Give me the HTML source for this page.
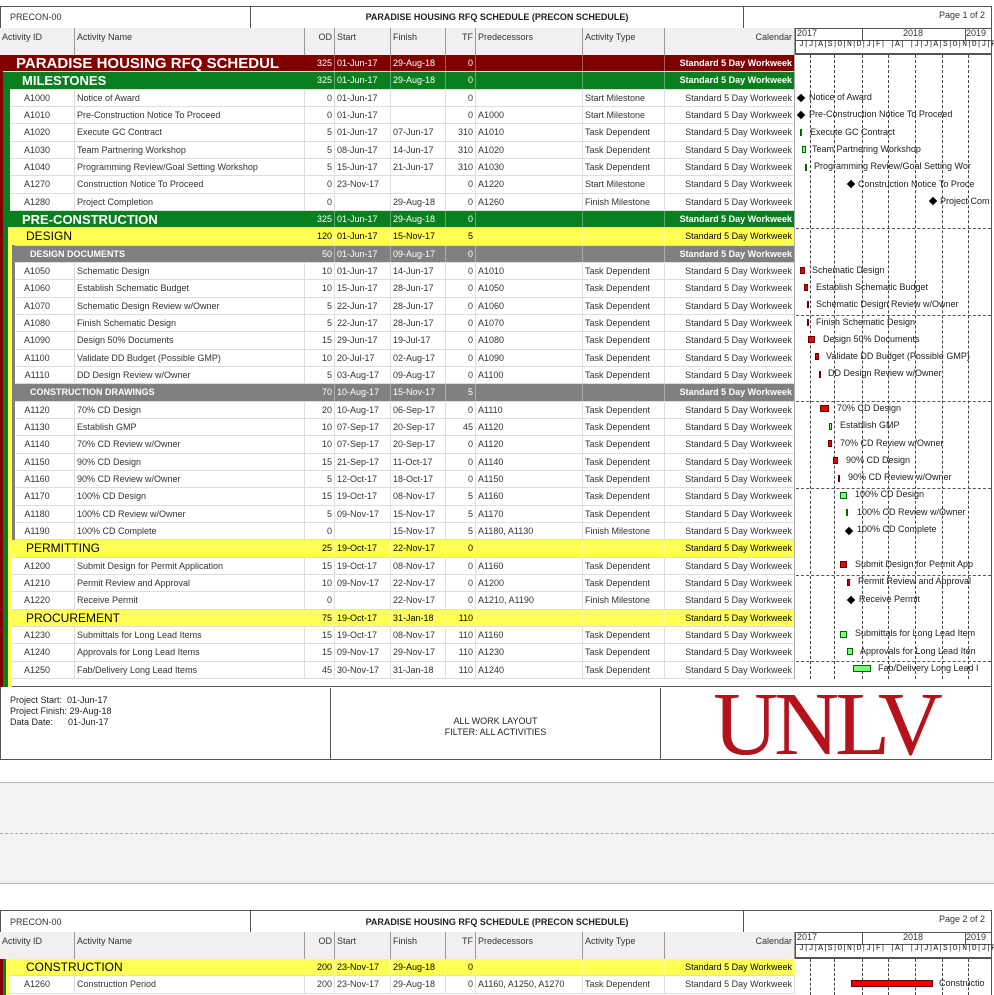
<!DOCTYPE html>
<html><head><meta charset="utf-8"><style>
*{margin:0;padding:0;box-sizing:border-box}
body{width:994px;height:995px;background:#fff;position:relative;overflow:hidden;font-family:"Liberation Sans",Arial,sans-serif;color:#333;font-size:9px}
.a{position:absolute}
.box{position:absolute;border:1px solid #555}
.r{position:absolute;left:0;width:795px;height:17.33px;border-bottom:1px solid #ddd}
.r span{position:absolute;top:0;height:17px;line-height:17px;white-space:nowrap;overflow:hidden;border-right:1px solid #ddd;padding:0 2px}
.id{left:0;width:75px;text-align:center}
.nm{left:75px;width:230px}
.od{left:305px;width:30px;text-align:right}
.st{left:335px;width:56px}
.fi{left:391px;width:55px}
.tf{left:446px;width:30px;text-align:right}
.pr{left:476px;width:107px}
.ty{left:583px;width:82px}
.ca{left:665px;width:130px;text-align:right}
.g span{border-right:1px solid rgba(255,255,255,.35)}
.red{background:#800000;color:#fff}
.grn{background:#0a7f1f;color:#fff}
.yel{background:#ffff55;color:#000}
.gry{background:#808080;color:#fff}
.t{border:none!important;overflow:visible!important;font-weight:bold}
.ch span{position:absolute;top:0;height:27px;padding:1px 2px;border-right:1px solid #999;background:#f0f0f0;font-size:9px;color:#333}
.gl{position:absolute;font-size:9px;color:#222;white-space:nowrap;line-height:10px}
.dm{position:absolute;width:6px;height:6px;background:#000;transform:rotate(45deg)}
.br{position:absolute;height:7px;border:1px solid #600;background:#e00}
.bg{position:absolute;height:7px;border:1px solid #060;background:#7f7}
.vd{position:absolute;width:0;border-left:1px dashed #444}
.hd{position:absolute;height:0;border-top:1px dashed #555}
</style></head><body>

<div class="box" style="left:0;top:6px;width:992px;height:23px"></div>
<div class="a" style="left:250px;top:6px;width:1px;height:23px;background:#555"></div>
<div class="a" style="left:743px;top:6px;width:1px;height:23px;background:#555"></div>
<div class="a" style="left:10px;top:12px;font-size:9px">PRECON-00</div>
<div class="a" style="left:251px;top:12px;width:492px;text-align:center;font-size:9px;font-weight:bold;color:#222">PARADISE HOUSING RFQ SCHEDULE (PRECON SCHEDULE)</div>
<div class="a" style="left:744px;top:10px;width:241px;text-align:right;font-size:9px">Page 1 of 2</div>

<div class="r ch" style="top:28px;height:27px;border-bottom:2px solid #666"><span class="id" style="text-align:left">Activity ID</span><span class="nm">Activity Name</span><span class="od">OD</span><span class="st">Start</span><span class="fi">Finish</span><span class="tf">TF</span><span class="pr">Predecessors</span><span class="ty">Activity Type</span><span class="ca">Calendar</span></div>
<div class="a" style="left:795px;top:28px;width:197px;height:27px;border:1px solid #555;border-bottom:2px solid #555;background:#fff"></div>
<div class="a" style="left:797px;top:28px;font-size:9px">2017</div>
<div class="a" style="left:903px;top:28px;font-size:9px">2018</div>
<div class="a" style="left:966px;top:28px;font-size:9px">2019</div>
<div class="a" style="left:862px;top:28px;width:1px;height:12px;background:#555"></div>
<div class="a" style="left:965px;top:28px;width:1px;height:12px;background:#555"></div>
<div class="a" style="left:796px;top:40px;width:195px;height:1px;background:#555"></div>
<div class="a" style="left:799px;top:40px;font-size:8px;white-space:nowrap;font-family:'Liberation Mono',monospace;color:#222">J|J|A|S|O|N|D|J|F| |A| |J|J|A|S|O|N|D|J|F|</div>

<div class="r g red" style="top:55px"><span class="t" style="left:14px;font-size:15px;line-height:18px">PARADISE HOUSING RFQ SCHEDUL</span><span class="od">325</span><span class="st">01-Jun-17</span><span class="fi">29-Aug-18</span><span class="tf">0</span><span class="pr"></span><span class="ty"></span><span class="ca" style="font-weight:bold">Standard 5 Day Workweek</span></div>
<div class="r g grn" style="top:72.3px"><span class="t" style="left:20px;font-size:13px">MILESTONES</span><span class="od">325</span><span class="st">01-Jun-17</span><span class="fi">29-Aug-18</span><span class="tf">0</span><span class="pr"></span><span class="ty"></span><span class="ca" style="font-weight:bold">Standard 5 Day Workweek</span></div>
<div class="r" style="top:89.7px"><span class="id">A1000</span><span class="nm">Notice of Award</span><span class="od">0</span><span class="st">01-Jun-17</span><span class="fi"></span><span class="tf">0</span><span class="pr"></span><span class="ty">Start Milestone</span><span class="ca">Standard 5 Day Workweek</span></div>
<div class="r" style="top:107px"><span class="id">A1010</span><span class="nm">Pre-Construction Notice To Proceed</span><span class="od">0</span><span class="st">01-Jun-17</span><span class="fi"></span><span class="tf">0</span><span class="pr">A1000</span><span class="ty">Start Milestone</span><span class="ca">Standard 5 Day Workweek</span></div>
<div class="r" style="top:124.3px"><span class="id">A1020</span><span class="nm">Execute GC Contract</span><span class="od">5</span><span class="st">01-Jun-17</span><span class="fi">07-Jun-17</span><span class="tf">310</span><span class="pr">A1010</span><span class="ty">Task Dependent</span><span class="ca">Standard 5 Day Workweek</span></div>
<div class="r" style="top:141.7px"><span class="id">A1030</span><span class="nm">Team Partnering Workshop</span><span class="od">5</span><span class="st">08-Jun-17</span><span class="fi">14-Jun-17</span><span class="tf">310</span><span class="pr">A1020</span><span class="ty">Task Dependent</span><span class="ca">Standard 5 Day Workweek</span></div>
<div class="r" style="top:159px"><span class="id">A1040</span><span class="nm">Programming Review/Goal Setting Workshop</span><span class="od">5</span><span class="st">15-Jun-17</span><span class="fi">21-Jun-17</span><span class="tf">310</span><span class="pr">A1030</span><span class="ty">Task Dependent</span><span class="ca">Standard 5 Day Workweek</span></div>
<div class="r" style="top:176.3px"><span class="id">A1270</span><span class="nm">Construction Notice To Proceed</span><span class="od">0</span><span class="st">23-Nov-17</span><span class="fi"></span><span class="tf">0</span><span class="pr">A1220</span><span class="ty">Start Milestone</span><span class="ca">Standard 5 Day Workweek</span></div>
<div class="r" style="top:193.7px"><span class="id">A1280</span><span class="nm">Project Completion</span><span class="od">0</span><span class="st"></span><span class="fi">29-Aug-18</span><span class="tf">0</span><span class="pr">A1260</span><span class="ty">Finish Milestone</span><span class="ca">Standard 5 Day Workweek</span></div>
<div class="r g grn" style="top:211px"><span class="t" style="left:20px;font-size:13px">PRE-CONSTRUCTION</span><span class="od">325</span><span class="st">01-Jun-17</span><span class="fi">29-Aug-18</span><span class="tf">0</span><span class="pr"></span><span class="ty"></span><span class="ca" style="font-weight:bold">Standard 5 Day Workweek</span></div>
<div class="r g yel" style="top:228.3px"><span class="t" style="left:24px;font-size:12px;font-weight:normal">DESIGN</span><span class="od">120</span><span class="st">01-Jun-17</span><span class="fi">15-Nov-17</span><span class="tf">5</span><span class="pr"></span><span class="ty"></span><span class="ca">Standard 5 Day Workweek</span></div>
<div class="r g gry" style="top:245.7px"><span class="t" style="left:28px;font-size:9px">DESIGN DOCUMENTS</span><span class="od">50</span><span class="st">01-Jun-17</span><span class="fi">09-Aug-17</span><span class="tf">0</span><span class="pr"></span><span class="ty"></span><span class="ca" style="font-weight:bold">Standard 5 Day Workweek</span></div>
<div class="r" style="top:263px"><span class="id">A1050</span><span class="nm">Schematic Design</span><span class="od">10</span><span class="st">01-Jun-17</span><span class="fi">14-Jun-17</span><span class="tf">0</span><span class="pr">A1010</span><span class="ty">Task Dependent</span><span class="ca">Standard 5 Day Workweek</span></div>
<div class="r" style="top:280.3px"><span class="id">A1060</span><span class="nm">Establish Schematic Budget</span><span class="od">10</span><span class="st">15-Jun-17</span><span class="fi">28-Jun-17</span><span class="tf">0</span><span class="pr">A1050</span><span class="ty">Task Dependent</span><span class="ca">Standard 5 Day Workweek</span></div>
<div class="r" style="top:297.7px"><span class="id">A1070</span><span class="nm">Schematic Design Review w/Owner</span><span class="od">5</span><span class="st">22-Jun-17</span><span class="fi">28-Jun-17</span><span class="tf">0</span><span class="pr">A1060</span><span class="ty">Task Dependent</span><span class="ca">Standard 5 Day Workweek</span></div>
<div class="r" style="top:315px"><span class="id">A1080</span><span class="nm">Finish Schematic Design</span><span class="od">5</span><span class="st">22-Jun-17</span><span class="fi">28-Jun-17</span><span class="tf">0</span><span class="pr">A1070</span><span class="ty">Task Dependent</span><span class="ca">Standard 5 Day Workweek</span></div>
<div class="r" style="top:332.3px"><span class="id">A1090</span><span class="nm">Design 50% Documents</span><span class="od">15</span><span class="st">29-Jun-17</span><span class="fi">19-Jul-17</span><span class="tf">0</span><span class="pr">A1080</span><span class="ty">Task Dependent</span><span class="ca">Standard 5 Day Workweek</span></div>
<div class="r" style="top:349.7px"><span class="id">A1100</span><span class="nm">Validate DD Budget (Possible GMP)</span><span class="od">10</span><span class="st">20-Jul-17</span><span class="fi">02-Aug-17</span><span class="tf">0</span><span class="pr">A1090</span><span class="ty">Task Dependent</span><span class="ca">Standard 5 Day Workweek</span></div>
<div class="r" style="top:367px"><span class="id">A1110</span><span class="nm">DD Design Review w/Owner</span><span class="od">5</span><span class="st">03-Aug-17</span><span class="fi">09-Aug-17</span><span class="tf">0</span><span class="pr">A1100</span><span class="ty">Task Dependent</span><span class="ca">Standard 5 Day Workweek</span></div>
<div class="r g gry" style="top:384.3px"><span class="t" style="left:28px;font-size:9px">CONSTRUCTION DRAWINGS</span><span class="od">70</span><span class="st">10-Aug-17</span><span class="fi">15-Nov-17</span><span class="tf">5</span><span class="pr"></span><span class="ty"></span><span class="ca" style="font-weight:bold">Standard 5 Day Workweek</span></div>
<div class="r" style="top:401.7px"><span class="id">A1120</span><span class="nm">70% CD Design</span><span class="od">20</span><span class="st">10-Aug-17</span><span class="fi">06-Sep-17</span><span class="tf">0</span><span class="pr">A1110</span><span class="ty">Task Dependent</span><span class="ca">Standard 5 Day Workweek</span></div>
<div class="r" style="top:419px"><span class="id">A1130</span><span class="nm">Establish GMP</span><span class="od">10</span><span class="st">07-Sep-17</span><span class="fi">20-Sep-17</span><span class="tf">45</span><span class="pr">A1120</span><span class="ty">Task Dependent</span><span class="ca">Standard 5 Day Workweek</span></div>
<div class="r" style="top:436.3px"><span class="id">A1140</span><span class="nm">70% CD Review w/Owner</span><span class="od">10</span><span class="st">07-Sep-17</span><span class="fi">20-Sep-17</span><span class="tf">0</span><span class="pr">A1120</span><span class="ty">Task Dependent</span><span class="ca">Standard 5 Day Workweek</span></div>
<div class="r" style="top:453.7px"><span class="id">A1150</span><span class="nm">90% CD Design</span><span class="od">15</span><span class="st">21-Sep-17</span><span class="fi">11-Oct-17</span><span class="tf">0</span><span class="pr">A1140</span><span class="ty">Task Dependent</span><span class="ca">Standard 5 Day Workweek</span></div>
<div class="r" style="top:471px"><span class="id">A1160</span><span class="nm">90% CD Review w/Owner</span><span class="od">5</span><span class="st">12-Oct-17</span><span class="fi">18-Oct-17</span><span class="tf">0</span><span class="pr">A1150</span><span class="ty">Task Dependent</span><span class="ca">Standard 5 Day Workweek</span></div>
<div class="r" style="top:488.3px"><span class="id">A1170</span><span class="nm">100% CD Design</span><span class="od">15</span><span class="st">19-Oct-17</span><span class="fi">08-Nov-17</span><span class="tf">5</span><span class="pr">A1160</span><span class="ty">Task Dependent</span><span class="ca">Standard 5 Day Workweek</span></div>
<div class="r" style="top:505.7px"><span class="id">A1180</span><span class="nm">100% CD Review w/Owner</span><span class="od">5</span><span class="st">09-Nov-17</span><span class="fi">15-Nov-17</span><span class="tf">5</span><span class="pr">A1170</span><span class="ty">Task Dependent</span><span class="ca">Standard 5 Day Workweek</span></div>
<div class="r" style="top:523px"><span class="id">A1190</span><span class="nm">100% CD Complete</span><span class="od">0</span><span class="st"></span><span class="fi">15-Nov-17</span><span class="tf">5</span><span class="pr">A1180, A1130</span><span class="ty">Finish Milestone</span><span class="ca">Standard 5 Day Workweek</span></div>
<div class="r g yel" style="top:540.3px"><span class="t" style="left:24px;font-size:12px;font-weight:normal">PERMITTING</span><span class="od">25</span><span class="st">19-Oct-17</span><span class="fi">22-Nov-17</span><span class="tf">0</span><span class="pr"></span><span class="ty"></span><span class="ca">Standard 5 Day Workweek</span></div>
<div class="r" style="top:557.7px"><span class="id">A1200</span><span class="nm">Submit Design for Permit Application</span><span class="od">15</span><span class="st">19-Oct-17</span><span class="fi">08-Nov-17</span><span class="tf">0</span><span class="pr">A1160</span><span class="ty">Task Dependent</span><span class="ca">Standard 5 Day Workweek</span></div>
<div class="r" style="top:575px"><span class="id">A1210</span><span class="nm">Permit Review and Approval</span><span class="od">10</span><span class="st">09-Nov-17</span><span class="fi">22-Nov-17</span><span class="tf">0</span><span class="pr">A1200</span><span class="ty">Task Dependent</span><span class="ca">Standard 5 Day Workweek</span></div>
<div class="r" style="top:592.3px"><span class="id">A1220</span><span class="nm">Receive Permit</span><span class="od">0</span><span class="st"></span><span class="fi">22-Nov-17</span><span class="tf">0</span><span class="pr">A1210, A1190</span><span class="ty">Finish Milestone</span><span class="ca">Standard 5 Day Workweek</span></div>
<div class="r g yel" style="top:609.7px"><span class="t" style="left:24px;font-size:12px;font-weight:normal">PROCUREMENT</span><span class="od">75</span><span class="st">19-Oct-17</span><span class="fi">31-Jan-18</span><span class="tf">110</span><span class="pr"></span><span class="ty"></span><span class="ca">Standard 5 Day Workweek</span></div>
<div class="r" style="top:627px"><span class="id">A1230</span><span class="nm">Submittals for Long Lead Items</span><span class="od">15</span><span class="st">19-Oct-17</span><span class="fi">08-Nov-17</span><span class="tf">110</span><span class="pr">A1160</span><span class="ty">Task Dependent</span><span class="ca">Standard 5 Day Workweek</span></div>
<div class="r" style="top:644.3px"><span class="id">A1240</span><span class="nm">Approvals for Long Lead Items</span><span class="od">15</span><span class="st">09-Nov-17</span><span class="fi">29-Nov-17</span><span class="tf">110</span><span class="pr">A1230</span><span class="ty">Task Dependent</span><span class="ca">Standard 5 Day Workweek</span></div>
<div class="r" style="top:661.7px"><span class="id">A1250</span><span class="nm">Fab/Delivery Long Lead Items</span><span class="od">45</span><span class="st">30-Nov-17</span><span class="fi">31-Jan-18</span><span class="tf">110</span><span class="pr">A1240</span><span class="ty">Task Dependent</span><span class="ca">Standard 5 Day Workweek</span></div>

<div class="a" style="left:0;top:55px;width:3px;height:624px;background:#800000"></div>
<div class="a" style="left:3px;top:72px;width:5px;height:607px;background:#0a7f1f"></div>
<div class="a" style="left:8px;top:89px;width:2px;height:122px;background:#0a7f1f"></div>
<div class="a" style="left:8px;top:228px;width:4px;height:451px;background:#ffff55"></div>
<div class="a" style="left:12px;top:245px;width:3px;height:295px;background:#808080"></div>
<div class="a" style="left:794px;top:55px;width:1px;height:624px;background:#aaa"></div>

<div class="vd" style="left:810px;top:55px;height:624px"></div>
<div class="vd" style="left:834px;top:55px;height:624px"></div>
<div class="vd" style="left:862px;top:55px;height:624px"></div>
<div class="vd" style="left:888px;top:55px;height:624px"></div>
<div class="vd" style="left:915px;top:55px;height:624px"></div>
<div class="vd" style="left:942px;top:55px;height:624px"></div>
<div class="vd" style="left:968px;top:55px;height:624px"></div>
<div class="hd" style="left:796px;top:228px;width:195px"></div>
<div class="hd" style="left:796px;top:315px;width:195px"></div>
<div class="hd" style="left:796px;top:401px;width:195px"></div>
<div class="hd" style="left:796px;top:488px;width:195px"></div>
<div class="hd" style="left:796px;top:575px;width:195px"></div>
<div class="hd" style="left:796px;top:661px;width:195px"></div>
<div class="a" style="left:991px;top:55px;width:1px;height:632px;background:#555"></div>

<div class="dm" style="left:798px;top:95px"></div><div class="gl" style="left:809px;top:92px">Notice of Award</div>
<div class="dm" style="left:798px;top:112px"></div><div class="gl" style="left:809px;top:109px">Pre-Construction Notice To Proceed</div>
<div class="bg" style="left:800px;top:129px;width:2px"></div><div class="gl" style="left:810px;top:127px">Execute GC Contract</div>
<div class="bg" style="left:802px;top:146px;width:4px"></div><div class="gl" style="left:812px;top:144px">Team Partnering Workshop</div>
<div class="bg" style="left:805px;top:164px;width:2px"></div><div class="gl" style="left:814px;top:161px">Programming Review/Goal Setting Wor</div>
<div class="dm" style="left:848px;top:181px"></div><div class="gl" style="left:858px;top:179px">Construction Notice To Proce</div>
<div class="dm" style="left:930px;top:198px"></div><div class="gl" style="left:940px;top:196px">Project Com</div>

<div class="br" style="left:800px;top:267px;width:5px"></div><div class="gl" style="left:812px;top:265px">Schematic Design</div>
<div class="br" style="left:804px;top:284px;width:4px"></div><div class="gl" style="left:816px;top:282px">Establish Schematic Budget</div>
<div class="br" style="left:807px;top:301px;width:2px"></div><div class="gl" style="left:816px;top:299px">Schematic Design Review w/Owner</div>
<div class="br" style="left:807px;top:319px;width:2px"></div><div class="gl" style="left:816px;top:317px">Finish Schematic Design</div>
<div class="br" style="left:808px;top:336px;width:7px"></div><div class="gl" style="left:823px;top:334px">Design 50% Documents</div>
<div class="br" style="left:815px;top:353px;width:4px"></div><div class="gl" style="left:826px;top:351px">Validate DD Budget (Possible GMP)</div>
<div class="br" style="left:819px;top:371px;width:2px"></div><div class="gl" style="left:828px;top:368px">DD Design Review w/Owner</div>
<div class="br" style="left:820px;top:405px;width:9px"></div><div class="gl" style="left:837px;top:403px">70% CD Design</div>
<div class="bg" style="left:829px;top:423px;width:3px"></div><div class="gl" style="left:840px;top:420px">Establish GMP</div>
<div class="br" style="left:828px;top:440px;width:4px"></div><div class="gl" style="left:840px;top:438px">70% CD Review w/Owner</div>
<div class="br" style="left:833px;top:457px;width:5px"></div><div class="gl" style="left:846px;top:455px">90% CD Design</div>
<div class="br" style="left:838px;top:475px;width:2px"></div><div class="gl" style="left:848px;top:472px">90% CD Review w/Owner</div>
<div class="bg" style="left:840px;top:492px;width:7px"></div><div class="gl" style="left:855px;top:489px">100% CD Design</div>
<div class="bg" style="left:846px;top:509px;width:2px"></div><div class="gl" style="left:857px;top:507px">100% CD Review w/Owner</div>
<div class="dm" style="left:846px;top:528px"></div><div class="gl" style="left:857px;top:524px">100% CD Complete</div>
<div class="br" style="left:840px;top:561px;width:7px"></div><div class="gl" style="left:855px;top:559px">Submit Design for Permit App</div>
<div class="br" style="left:847px;top:579px;width:3px"></div><div class="gl" style="left:858px;top:576px">Permit Review and Approval</div>
<div class="dm" style="left:848px;top:597px"></div><div class="gl" style="left:859px;top:594px">Receive Permit</div>
<div class="bg" style="left:840px;top:631px;width:7px"></div><div class="gl" style="left:855px;top:628px">Submittals for Long Lead Item</div>
<div class="bg" style="left:847px;top:648px;width:6px"></div><div class="gl" style="left:860px;top:646px">Approvals for Long Lead Iten</div>
<div class="bg" style="left:853px;top:665px;width:18px"></div><div class="gl" style="left:878px;top:663px">Fab/Delivery Long Lead I</div>

<div class="a" style="left:0;top:679px;width:992px;height:8px;border-bottom:1px solid #555"></div>
<div class="a" style="left:0;top:679px;width:3px;height:8px;background:#800000"></div>
<div class="a" style="left:3px;top:679px;width:5px;height:8px;background:#0a7f1f"></div>
<div class="a" style="left:8px;top:679px;width:4px;height:8px;background:#ffff55"></div>

<div class="box" style="left:0;top:687px;width:992px;height:73px;border-top:none"></div>
<div class="a" style="left:330px;top:688px;width:1px;height:72px;background:#555"></div>
<div class="a" style="left:660px;top:688px;width:1px;height:72px;background:#555"></div>
<div class="a" style="left:10px;top:695px;font-size:9px;line-height:11px;color:#222">Project Start:&nbsp; 01-Jun-17<br>Project Finish: 29-Aug-18<br>Data Date:&nbsp;&nbsp;&nbsp;&nbsp;&nbsp; 01-Jun-17</div>
<div class="a" style="left:331px;top:716px;width:329px;text-align:center;font-size:9px;line-height:11px;color:#222">ALL WORK LAYOUT<br>FILTER: ALL ACTIVITIES</div>
<div class="a" style="left:676px;top:688px;width:300px;height:72px;overflow:hidden"><div style="margin-top:-8px;width:300px;text-align:center;font-family:'Liberation Serif',serif;font-size:90px;line-height:90px;color:#b5121b;letter-spacing:-4px">UNLV</div></div>

<div class="a" style="left:0;top:782px;width:994px;height:102px;background:#f2f2f2;border-top:1px solid #bbb;border-bottom:1px solid #bbb"></div>
<div class="hd" style="left:0;top:833px;width:994px;border-top:1px dashed #aaa"></div>

<div class="box" style="left:0;top:910px;width:992px;height:23px"></div>
<div class="a" style="left:250px;top:910px;width:1px;height:23px;background:#555"></div>
<div class="a" style="left:743px;top:910px;width:1px;height:23px;background:#555"></div>
<div class="a" style="left:10px;top:917px;font-size:9px">PRECON-00</div>
<div class="a" style="left:251px;top:917px;width:492px;text-align:center;font-size:9px;font-weight:bold;color:#222">PARADISE HOUSING RFQ SCHEDULE (PRECON SCHEDULE)</div>
<div class="a" style="left:744px;top:914px;width:241px;text-align:right;font-size:9px">Page 2 of 2</div>
<div class="r ch" style="top:932px;height:27px;border-bottom:2px solid #666"><span class="id" style="text-align:left">Activity ID</span><span class="nm">Activity Name</span><span class="od">OD</span><span class="st">Start</span><span class="fi">Finish</span><span class="tf">TF</span><span class="pr">Predecessors</span><span class="ty">Activity Type</span><span class="ca">Calendar</span></div>
<div class="a" style="left:795px;top:932px;width:197px;height:27px;border:1px solid #555;border-bottom:2px solid #555;background:#fff"></div>
<div class="a" style="left:797px;top:932px;font-size:9px">2017</div>
<div class="a" style="left:903px;top:932px;font-size:9px">2018</div>
<div class="a" style="left:966px;top:932px;font-size:9px">2019</div>
<div class="a" style="left:862px;top:932px;width:1px;height:12px;background:#555"></div>
<div class="a" style="left:965px;top:932px;width:1px;height:12px;background:#555"></div>
<div class="a" style="left:796px;top:944px;width:195px;height:1px;background:#555"></div>
<div class="a" style="left:799px;top:944px;font-size:8px;white-space:nowrap;font-family:'Liberation Mono',monospace;color:#222">J|J|A|S|O|N|D|J|F| |A| |J|J|A|S|O|N|D|J|F|</div>

<div class="r g yel" style="top:959px"><span class="t" style="left:24px;font-size:12px;font-weight:normal">CONSTRUCTION</span><span class="od">200</span><span class="st">23-Nov-17</span><span class="fi">29-Aug-18</span><span class="tf">0</span><span class="pr"></span><span class="ty"></span><span class="ca">Standard 5 Day Workweek</span></div>
<div class="r" style="top:976.3px"><span class="id">A1260</span><span class="nm">Construction Period</span><span class="od">200</span><span class="st">23-Nov-17</span><span class="fi">29-Aug-18</span><span class="tf">0</span><span class="pr">A1160, A1250, A1270</span><span class="ty">Task Dependent</span><span class="ca">Standard 5 Day Workweek</span></div>
<div class="a" style="left:0;top:959px;width:3px;height:36px;background:#800000"></div>
<div class="a" style="left:3px;top:959px;width:3px;height:36px;background:#0a7f1f"></div>
<div class="a" style="left:6px;top:959px;width:4px;height:36px;background:#ffff55"></div>
<div class="a" style="left:991px;top:959px;width:1px;height:36px;background:#555"></div>
<div class="vd" style="left:810px;top:959px;height:36px"></div>
<div class="vd" style="left:834px;top:959px;height:36px"></div>
<div class="vd" style="left:862px;top:959px;height:36px"></div>
<div class="vd" style="left:888px;top:959px;height:36px"></div>
<div class="vd" style="left:915px;top:959px;height:36px"></div>
<div class="vd" style="left:942px;top:959px;height:36px"></div>
<div class="vd" style="left:968px;top:959px;height:36px"></div>
<div class="br" style="left:851px;top:980px;width:82px"></div><div class="gl" style="left:939px;top:978px">Constructio</div>
</body></html>
